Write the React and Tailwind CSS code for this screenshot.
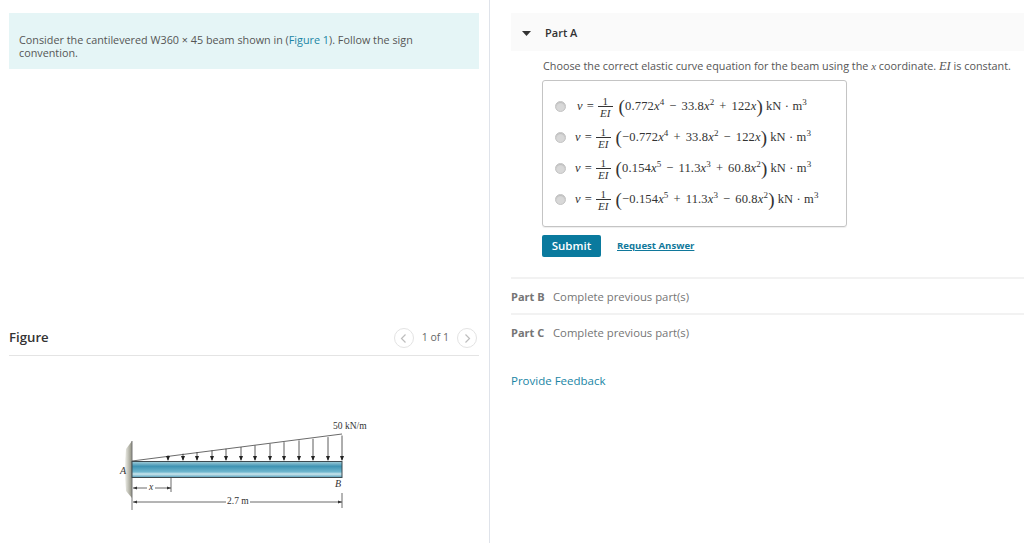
const SANS = 'font-["Open_Sans","Noto_Sans",sans-serif]'

function X({ children = 'x' }) {
  return <i>{children}</i>
}

function Equation({ pl, children }) {
  return (
    <div className="flex items-center h-[31px]">
      <span className="w-[11px] h-[11px] rounded-full bg-[#d8d8d8] border border-[#c4c4c4] shrink-0 shadow-[inset_0_1px_1px_#bbb]" />
      <div className={`flex items-center text-[12.5px] tracking-[0.15px] text-[#333] whitespace-nowrap font-["Liberation_Serif",serif] ${pl}`}>
        <i>v</i>
        <span className="ml-[4px] mr-[4px]">=</span>
        <span className="inline-flex flex-col items-center text-[11px] leading-[10px] mr-[5px]">
          <span className="px-[1px]">1</span>
          <i className="border-t border-[#333] px-[2px] pt-[1px]">EI</i>
        </span>
        {children}
      </div>
    </div>
  )
}

function Paren({ children, gap = 'ml-[3px]' }) {
  return <span className={`text-[19px] leading-none font-light ${gap}`}>{children}</span>
}

function Sup({ children }) {
  return <sup className="text-[9px] leading-none">{children}</sup>
}

function Op({ children }) {
  return <span className="mx-[5px]">{children}</span>
}

function Unit() {
  return (
    <>
      <span className="ml-[3px]">kN · m</span>
      <Sup>3</Sup>
    </>
  )
}

function Beam() {
  const arrows = [168, 183, 197, 212, 226, 241, 255, 270, 284, 299, 313, 328, 342]
  const top = (x) => 459.5 - ((x - 132) * 24) / 210
  return (
    <svg width="270" height="125" viewBox="100 410 270 125" className="block">
      <defs>
        <linearGradient id="beam" x1="0" y1="0" x2="0" y2="1">
          <stop offset="0" stopColor="#a4cfdb" />
          <stop offset="0.3" stopColor="#3f93b3" />
          <stop offset="0.65" stopColor="#6fb7ce" />
          <stop offset="0.78" stopColor="#cbe6ed" />
          <stop offset="1" stopColor="#4f9cb9" />
        </linearGradient>
        <linearGradient id="wall" x1="0" y1="0" x2="1" y2="0">
          <stop offset="0" stopColor="#f0f0ea" />
          <stop offset="1" stopColor="#8f8f80" />
        </linearGradient>
      </defs>
      <path d="M132 440 L132 497 L126 490 Q124 468 126 448 Z" fill="url(#wall)" />
      <line x1="132" y1="440" x2="132" y2="509" stroke="#777" strokeWidth="1" />
      <path d="M132 460 L342 433" stroke="#444" strokeWidth="0.8" fill="none" />
      {arrows.map((x) => (
        <g key={x}>
          <line x1={x} y1={top(x) - 1} x2={x} y2="459" stroke="#333" strokeWidth="0.8" />
          <path d={`M${x - 2} 455 L${x + 2} 455 L${x} 460 Z`} fill="#222" />
        </g>
      ))}
      <rect x="132" y="460.5" width="210" height="16" fill="url(#beam)" stroke="#3d4a50" strokeWidth="1" />
      <g fontFamily="Liberation Serif, serif" fill="#333">
        <text x="333" y="428" fontSize="9.5">50 kN/m</text>
        <text x="120" y="473" fontSize="10" fontStyle="italic">A</text>
        <text x="335" y="486" fontSize="10" fontStyle="italic">B</text>
        <text x="149" y="489" fontSize="9.5" fontStyle="italic">x</text>
        <text x="227" y="503" fontSize="9.5">2.7 m</text>
      </g>
      <g stroke="#444" strokeWidth="0.8" fill="none">
        <path d="M133 487 H147 M155 487 H171" />
        <path d="M171 476 V491" />
        <path d="M133 501 H226 M250 501 H342" />
        <path d="M342 492 V507" />
      </g>
      <path d="M133 487 L137 485.5 V488.5 Z M171 487 L167 485.5 V488.5 Z M133 501 L137 499.5 V502.5 Z M342 501 L338 499.5 V502.5 Z" fill="#333" />
    </svg>
  )
}

function PagerButton({ children }) {
  return (
    <span className="w-[20px] h-[20px] rounded-full border border-[#e3e3e3] flex items-center justify-center">
      <svg width="8" height="11" viewBox="0 0 8 11" fill="none" stroke="#bdbdbd" strokeWidth="1.2">
        <path d={children} />
      </svg>
    </span>
  )
}

function LockedPart({ name }) {
  return (
    <div className="h-[36px] border-t-2 border-[#f2f2f2] flex items-center text-[11.3px] text-[#757575] pt-[2px]">
      <b className="font-bold w-[42px] text-[11px]">{name}</b>
      <span>Complete previous part(s)</span>
    </div>
  )
}

export default function App() {
  return (
    <div className={`flex w-[1024px] h-[543px] overflow-hidden bg-white ${SANS}`}>
      {/* left column */}
      <div className="w-[490px] shrink-0 border-r border-[#dfe3ea] pl-[9px] pr-[10px] pt-[13px]">
        <div className="h-[56px] bg-[#e5f5f6] pl-[10px] pr-[60px] pt-[20px] text-[10.8px] leading-[13px] text-[#555]">
          <span>Consider the cantilevered W360 × 45 beam shown in (</span>
          <span className="text-[#1a85a5]">Figure 1</span>
          <span>). Follow the sign convention.</span>
        </div>
        <div className="mt-[258px] h-[29px] border-b border-[#e4e4e4] flex items-start justify-between">
          <span className="text-[13.2px] leading-[21px] font-semibold text-[#333]">Figure</span>
          <div className="flex items-center gap-[8px] pr-[2px] pt-[1px] text-[10.5px] text-[#666]">
            <PagerButton>M5.5 1.5 L1.5 5.5 L5.5 9.5</PagerButton>
            <span>1 of 1</span>
            <PagerButton>M2.5 1.5 L6.5 5.5 L2.5 9.5</PagerButton>
          </div>
        </div>
        <div className="ml-[91px] mt-[55px]">
          <Beam />
        </div>
      </div>

      {/* right column */}
      <div className="flex-1 pl-[21px] pt-[13px]">
        <div className="h-[38px] bg-[#fafafa] flex items-center pl-[11px] pt-[3px]">
          <svg width="9" height="5" viewBox="0 0 9 5" className="shrink-0">
            <path d="M0 0 H9 L4.5 5 Z" fill="#333" />
          </svg>
          <span className="ml-[14px] text-[11px] font-semibold text-[#333]">Part A</span>
        </div>
        <div className="pl-[32px]">
          <p className="mt-[8px] text-[10.8px] leading-[14px] text-[#555] whitespace-nowrap">
            <span>Choose the correct elastic curve equation for the beam using the </span>
            <i className='font-["Liberation_Serif",serif] text-[11px]'>x</i>
            <span> coordinate. </span>
            <i className='font-["Liberation_Serif",serif] text-[12.5px]'>EI</i>
            <span> is constant.</span>
          </p>
          <div className="mt-[7px] -ml-[1px] w-[305px] h-[147px] border border-[#c4c4c4] rounded-[3px] pl-[12px] pt-[10px] shadow-[0_1px_1px_#eee]">
            <Equation pl="pl-[11px]">
              <Paren gap="ml-[1px]">(</Paren>0.772<X />
              <Sup>4</Sup>
              <Op>−</Op>33.8<X />
              <Sup>2</Sup>
              <Op>+</Op>122<X />
              <Paren gap="">)</Paren>
              <Unit />
            </Equation>
            <Equation pl="pl-[9px]">
              <Paren gap="">(</Paren>−0.772<X />
              <Sup>4</Sup>
              <Op>+</Op>33.8<X />
              <Sup>2</Sup>
              <Op>−</Op>122<X />
              <Paren gap="">)</Paren>
              <Unit />
            </Equation>
            <Equation pl="pl-[9px]">
              <Paren gap="">(</Paren>0.154<X />
              <Sup>5</Sup>
              <Op>−</Op>11.3<X />
              <Sup>3</Sup>
              <Op>+</Op>60.8<X />
              <Sup>2</Sup>
              <Paren gap="">)</Paren>
              <Unit />
            </Equation>
            <Equation pl="pl-[9px]">
              <Paren gap="">(</Paren>−0.154<X />
              <Sup>5</Sup>
              <Op>+</Op>11.3<X />
              <Sup>3</Sup>
              <Op>−</Op>60.8<X />
              <Sup>2</Sup>
              <Paren gap="">)</Paren>
              <Unit />
            </Equation>
          </div>
          <div className="mt-[8px] -ml-[1px] flex items-center">
            <span className="w-[59px] h-[22px] bg-[#0a7a9e] rounded-[2px] text-white text-[11.5px] font-semibold flex items-center justify-center">
              Submit
            </span>
            <span className="ml-[16px] text-[9.6px] font-bold underline text-[#10789b]">Request Answer</span>
          </div>
        </div>
        <div className="mt-[20px]">
          <LockedPart name="Part B" />
          <LockedPart name="Part C" />
        </div>
        <p className="mt-[24px] text-[11.5px] leading-[16px] text-[#1a85a5]">Provide Feedback</p>
      </div>
    </div>
  )
}
